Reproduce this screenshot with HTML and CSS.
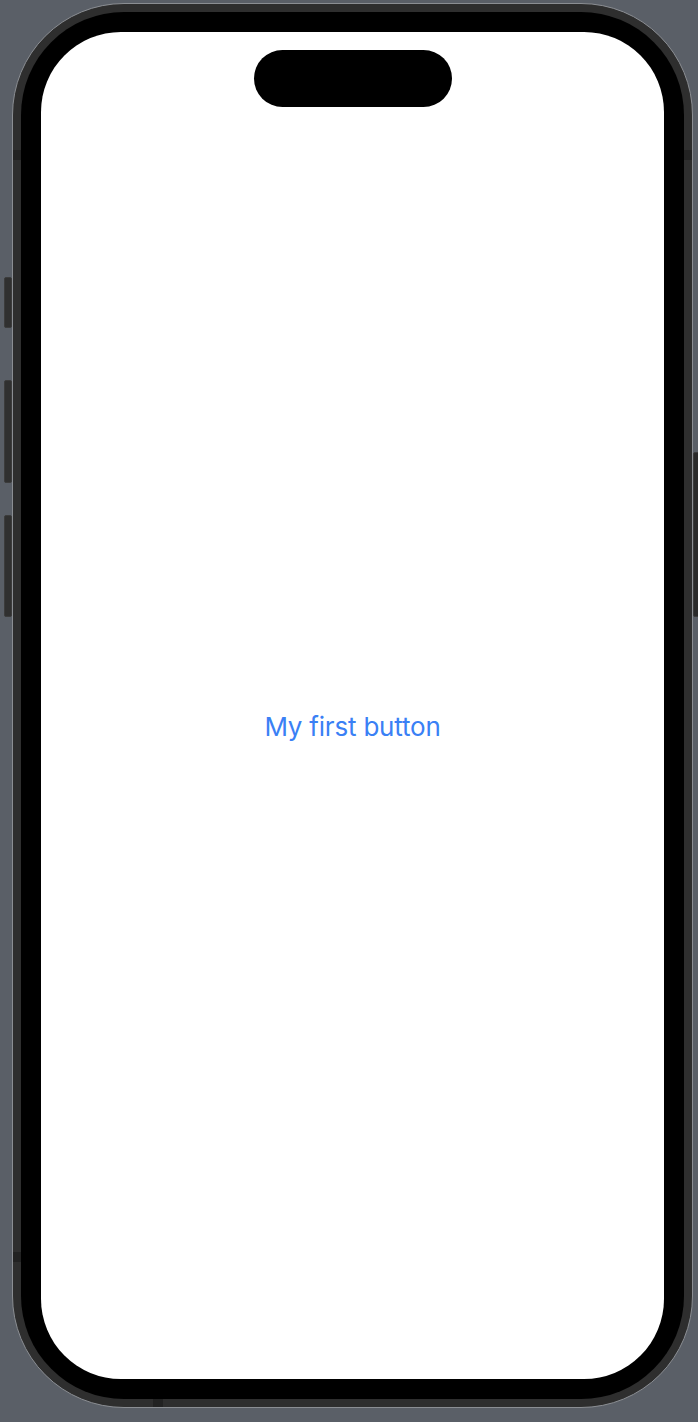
FILE: index.html
```html
<!DOCTYPE html>
<html lang="en">
<head>
    <meta charset="UTF-8">
    <meta name="viewport" content="width=device-width, initial-scale=1.0">
    <title>My first button</title>
    <link rel="stylesheet" href="styles.css">
</head>
<body>
<div class="phone">
    <span class="side-button mute"></span>
    <span class="side-button volume-up"></span>
    <span class="side-button volume-down"></span>
    <span class="side-button power"></span>

    <span class="antenna left-top"></span>
    <span class="antenna left-bottom"></span>
    <span class="antenna right-top"></span>
    <span class="antenna bottom"></span>

    <div class="bezel">
        <div class="screen">
            <div class="island"></div>
            <div class="content">
                <button class="link-button">My first button</button>
            </div>
        </div>
    </div>
</div>
</body>
</html>
```

FILE: styles.css
```css
* {
    margin: 0;
    padding: 0;
    box-sizing: border-box;
}

html, body {
    height: 100%;
}

body {
    background: #5a5f67;
    padding: 3px 0 0 12px;
    overflow: hidden;
    font-family: 'Inter', 'Liberation Sans', sans-serif;
}

.phone {
    position: relative;
    width: 681px;
    height: 1405px;
    padding: 8px;
    border: 1px solid #8b8e93;
    border-radius: 112px;
    background: #2e2e2e;
}

.bezel {
    height: 100%;
    padding: 20px;
    border-radius: 103px;
    background: #000;
}

.screen {
    display: flex;
    flex-direction: column;
    align-items: center;
    height: 100%;
    padding: 18px 0 34px;
    border-radius: 80px;
    background: #fff;
}

.island {
    width: 198px;
    height: 57px;
    border-radius: 29px;
    background: #000;
}

.content {
    flex: 1;
    display: flex;
    align-items: center;
    justify-content: center;
}

.link-button {
    border: none;
    background: none;
    color: #3a80f5;
    font-family: inherit;
    font-size: 26px;
    letter-spacing: -0.2px;
    cursor: pointer;
}

/* hardware details on the frame */
.side-button {
    position: absolute;
    width: 8px;
    background: #303030;
    border: 1px solid #3c3c3c;
    border-radius: 2px;
}

.mute {
    left: -9px;
    top: 273px;
    height: 51px;
}

.volume-up {
    left: -9px;
    top: 376px;
    height: 103px;
}

.volume-down {
    left: -9px;
    top: 511px;
    height: 102px;
}

.power {
    right: -9px;
    top: 448px;
    height: 165px;
    background: #2a2a2a;
}

.antenna {
    position: absolute;
    background: #222;
}

.left-top,
.left-bottom,
.right-top {
    width: 8px;
    height: 10px;
}

.left-top {
    left: 0;
    top: 146px;
}

.left-bottom {
    left: 0;
    top: 1248px;
}

.right-top {
    right: 0;
    top: 146px;
}

.bottom {
    left: 140px;
    bottom: 0;
    width: 10px;
    height: 8px;
}
```
